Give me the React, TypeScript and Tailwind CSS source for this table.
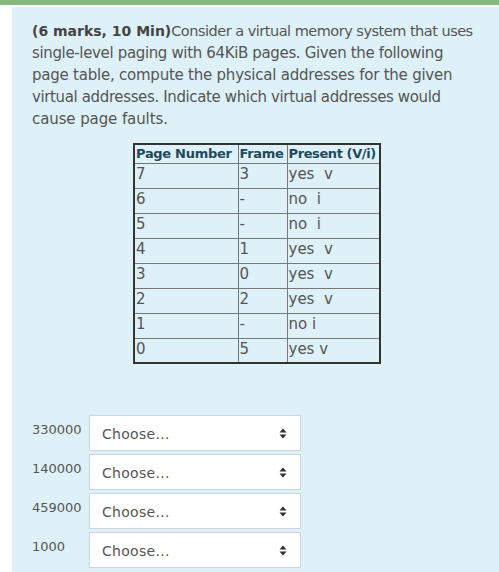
import React from "react";

const rows: [string, string, string][] = [
  ["7", "3", "yes  v"],
  ["6", "-", "no  i"],
  ["5", "-", "no  i"],
  ["4", "1", "yes  v"],
  ["3", "0", "yes  v"],
  ["2", "2", "yes  v"],
  ["1", "-", "no i"],
  ["0", "5", "yes v"],
];

const addrs = ["330000", "140000", "459000", "1000"];

function Arrows() {
  return (
    <svg width="8" height="11" viewBox="0 0 8 11">
      <path d="M4 0.5 L7.5 4.5 H0.5 Z" fill="#333" />
      <path d="M4 10.5 L7.5 6.5 H0.5 Z" fill="#333" />
    </svg>
  );
}

export default function App() {
  return (
    <div
      className="w-[499px] h-[572px] bg-white overflow-hidden"
      style={{ fontFamily: '"DejaVu Sans", "Liberation Sans", sans-serif' }}
    >
      <div className="h-[5px] bg-[#86b77c]" />
      <div className="pl-[12px] pt-[2px]">
        <div className="bg-[#def1f8] h-[565px] pl-[20px] pr-[12px] pt-[13px]">
          <div className="text-[15px] leading-[22px] text-[#555] whitespace-nowrap">
            <div>
              <b className="text-[#444] text-[14px]">(6 marks, 10 Min)</b>
              <span className="text-[14.5px] tracking-[-0.5px]">Consider a virtual memory system that uses</span>
            </div>
            <div className="tracking-[-0.35px]">single-level paging with 64KiB pages. Given the following</div>
            <div className="tracking-[-0.23px]">page table, compute the physical addresses for the given</div>
            <div className="tracking-[-0.37px]">virtual addresses. Indicate which virtual addresses would</div>
            <div className="tracking-[-0.1px]">cause page faults.</div>
          </div>
          <table className="mt-[13px] ml-[101px] w-[246px] table-fixed border-collapse border-2 border-[#333] text-[15px] text-[#555]">
            <colgroup>
              <col className="w-[104px]" />
              <col className="w-[49px]" />
              <col className="w-[93px]" />
            </colgroup>
            <thead>
              <tr className="h-[19px]">
                <th className="border border-[#777] px-[1px] text-left font-bold text-[13px] tracking-[-0.3px] text-[#1f4a5c] leading-[17px] whitespace-nowrap overflow-hidden">
                  Page Number
                </th>
                <th className="border border-[#777] px-[1px] text-left font-bold text-[13px] tracking-[-0.3px] text-[#1f4a5c] leading-[17px] whitespace-nowrap overflow-hidden">
                  Frame
                </th>
                <th className="border border-[#777] px-[1px] text-left font-bold text-[13px] tracking-[-0.4px] text-[#1f4a5c] leading-[17px] whitespace-nowrap overflow-hidden">
                  Present (V/i)
                </th>
              </tr>
            </thead>
            <tbody>
              {rows.map((r, i) => (
                <tr key={i} className="h-[25px]">
                  <td className="border border-[#777] px-[1px] align-top leading-[20px]">{r[0]}</td>
                  <td className="border border-[#777] px-[1px] align-top leading-[20px]">{r[1]}</td>
                  <td className="border border-[#777] px-[1px] align-top leading-[20px] whitespace-pre">{r[2]}</td>
                </tr>
              ))}
            </tbody>
          </table>
          <div className="mt-[51px] flex flex-col gap-[3px]">
            {addrs.map((a) => (
              <div key={a} className="flex items-start">
                <div className="w-[57px] pt-[6px] text-[13px] leading-[18px] text-[#555]">{a}</div>
                <div className="w-[212px] h-[36px] bg-white border border-[#ced4da] flex items-center justify-between pl-[12px] pr-[13px] text-[14px] tracking-[0.3px] text-[#555]">
                  <span className="pt-[3px]">Choose...</span>
                  <Arrows />
                </div>
              </div>
            ))}
          </div>
        </div>
      </div>
    </div>
  );
}
